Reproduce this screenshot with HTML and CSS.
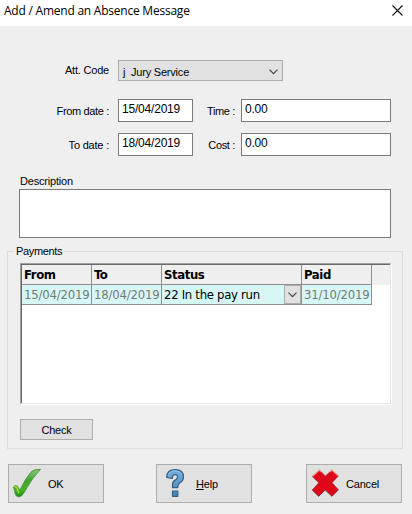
FILE: index.html
```html
<!DOCTYPE html>
<html lang="en">
<head>
<meta charset="utf-8">
<title>Add / Amend an Absence Message</title>
<link rel="stylesheet" href="styles.css">
</head>
<body>
<header class="titlebar">
  <span class="title">Add / Amend an Absence Message</span>
  <svg class="close" width="11" height="11" viewBox="0 0 11 11"><path d="M.5.5l10 10M10.5.5l-10 10" stroke="#111" stroke-width="1.1"/></svg>
</header>
<main class="dialog">
  <div class="form">
    <span class="label code-label">Att. Code</span>
    <div class="select"><span class="code">j&nbsp; Jury Service</span><svg width="9" height="6" viewBox="0 0 9 6"><path d="M.5.7l4 4 4-4" fill="none" stroke="#444" stroke-width="1.2"/></svg></div>
    <span class="label from-label">From date :</span>
    <div class="input"><span class="date">15/04/2019</span></div>
    <span class="label time-label">Time :</span>
    <div class="input"><span class="amount">0.00</span></div>
    <span class="label to-label">To date :</span>
    <div class="input"><span class="date">18/04/2019</span></div>
    <span class="label cost-label">Cost :</span>
    <div class="input"><span class="amount">0.00</span></div>
  </div>
  <div class="description-label"><span class="desc">Description</span></div>
  <div class="textarea"></div>
  <section class="group">
    <span class="legend">Payments</span>
    <div class="table">
      <div class="row head">
        <div class="cell">From</div><div class="cell">To</div><div class="cell">Status</div><div class="cell">Paid</div>
      </div>
      <div class="row data">
        <div class="cell muted">15/04/2019</div><div class="cell muted">18/04/2019</div>
        <div class="cell status"><span>22 In the pay run</span><span class="drop"><svg width="9" height="6" viewBox="0 0 9 6"><path d="M.5.7l4 4 4-4" fill="none" stroke="#444" stroke-width="1.2"/></svg></span></div>
        <div class="cell muted">31/10/2019</div>
      </div>
    </div>
    <div class="button check"><span>Check</span></div>
  </section>
  <footer class="actions">
    <div class="button action">
      <svg class="icon" width="36" height="37" viewBox="0 0 36 37">
        <defs><linearGradient id="green" x1="0" y1="0" x2="0" y2="1"><stop offset="0" stop-color="#8bc87c"/><stop offset=".4" stop-color="#43a336"/><stop offset=".75" stop-color="#48b51e"/><stop offset="1" stop-color="#228c22"/></linearGradient></defs>
        <path d="M4.500 22Q6 19.700 8.500 21.200Q10 24 10.800 25.500Q16.500 13 22.500 6.500Q25 4.200 31.500 4.300Q22.500 13.500 14.500 28.500Q12.500 32 9.500 31.800Q7 31.800 6.200 28.500Q5.500 25.500 4.500 22Z" fill="url(#green)" stroke="#338e27" stroke-width=".8"/>
        <path d="M5.300 22.300Q7 20.800 8 23L9.800 28.200" fill="none" stroke="#a5de3d" stroke-width="1.400"/>
      </svg>
      <span class="ok">OK</span>
    </div>
    <div class="button action">
      <svg class="icon" width="36" height="37" viewBox="0 0 36 37">
        <defs><linearGradient id="blue" x1="0" y1="0" x2="0" y2="1"><stop offset="0" stop-color="#78b0df"/><stop offset="1" stop-color="#4482b5"/></linearGradient></defs>
        <path d="M9.700 12.400Q9.700 4.600 18.200 4.600Q26.500 4.600 26.500 12Q26.500 15.800 22.500 18.200Q20.800 19.400 20.800 22.600H15.500V19.500Q15.500 16.500 18.600 14.700Q20.600 13.400 20.500 11.500Q20.400 9.600 18 9.600Q15.500 9.600 15.200 13.500ZM15.500 26H20.800V31.300H15.500Z" fill="url(#blue)" stroke="#365f83" stroke-width="1.200" stroke-linejoin="round"/>
        <path d="M11 10.700Q12 5.800 18 5.800Q23 5.800 24.800 9" fill="none" stroke="#94c7ed" stroke-width=".8"/>
      </svg>
      <span class="help"><u>H</u>elp</span>
    </div>
    <div class="button action">
      <svg class="icon" width="36" height="37" viewBox="0 0 36 37">
        <path d="M12.500 5L18.400 11.200 24.800 5 31.300 11 25 17.700 31.300 24.800 25 31.200 18.200 24.800 11.800 31.200 5.300 25 11.800 17.800 5.300 11.500Z" fill="#de0618" stroke="#a32630" stroke-width=".8"/>
        <path d="M5.500 11.300L12.500 5.100 14.400 7M22.800 7L24.900 5.100 31 10.700" fill="none" stroke="#f3a28f" stroke-width="1.100"/>
        <path d="M5.500 25.200L11.800 31.200 18.200 24.900 25 31.200 31.200 24.900" fill="none" stroke="#8b222a" stroke-width=".8"/>
      </svg>
      <span class="cancel">Cancel</span>
    </div>
  </footer>
</main>
</body>
</html>
```
FILE: styles.css
```css
* { box-sizing: border-box; }
body { margin: 0; width: 412px; height: 514px; overflow: hidden; background: #efefef; color: #000; font: 11px/14px "Liberation Sans", sans-serif; letter-spacing: -.2px; }
span { white-space: nowrap; }
svg { display: block; flex: none; }
.titlebar { height: 26px; display: flex; justify-content: space-between; background: #fff; padding: 3px 9px 0 4px; }
.title { font: 12px/16px "Open Sans", sans-serif; letter-spacing: -.23px; }
.close { margin-top: 2px; }
.dialog { padding-top: 34px; }
.form { display: grid; grid-template-columns: 118px 75px 48px 150px; grid-template-rows: 21px 18px 23px 11px 23px; }
.label { justify-self: end; align-self: center; margin-right: 9px; }
.from-label { letter-spacing: -.35px; }
.time-label, .cost-label { margin-right: 6px; letter-spacing: -.35px; }
.code-label, .select { grid-row: 1; }
.code-label { margin-top: -2px; }
.from-label, .from-label + .input, .time-label, .time-label + .input { grid-row: 3; }
.to-label, .to-label + .input, .cost-label, .cost-label + .input { grid-row: 5; }
.select { grid-column: 2 / 5; width: 165px; display: flex; align-items: center; justify-content: space-between; background: #e1e1e1; border: 1px solid #adadad; padding: 2px 4px 0; }
.input { background: #fff; border: 1px solid #7a7a7a; padding: 2px 3px; font-size: 12px; letter-spacing: -.2px; }
.description-label { margin: 18px 0 0 20px; height: 14px; }
.textarea { margin: 1px 0 0 19px; width: 372px; height: 49px; background: #fff; border: 1px solid #7a7a7a; }
.group { margin: 13px 0 0 7px; width: 396px; height: 198px; border: 1px solid #dcdcdc; display: flex; flex-direction: column; padding-left: 12px; }
.legend { align-self: flex-start; height: 14px; margin: -8px 0 0 -6px; padding: 0 2px; background: #efefef; letter-spacing: -.35px; }
.table { margin-top: 5px; width: 371px; height: 141px; background: #fff; border: 1px solid; border-color: #a0a0a0 #e3e3e3 #e3e3e3 #a0a0a0; box-shadow: inset 1px 1px #696969, 1px 1px #fff; padding: 1px 0 0 1px; font: 13px/19px "DejaVu Sans Condensed", "DejaVu Sans", sans-serif; letter-spacing: -.3px; flex: none; }
.row { display: grid; grid-template-columns: 70px 70px 140px 70px; }
.head { height: 20px; background: #efefef; font-weight: bold; letter-spacing: -.4px; }
.cell { border-right: 1px solid #8e8e8e; border-bottom: 1px solid #8e8e8e; padding-left: 2px; height: 20px; white-space: nowrap; }
.data .cell { background: #d7f7f6; }
.data .muted { color: #777; letter-spacing: -.2px; }
.status { display: flex; justify-content: space-between; }
.drop { width: 17px; height: 19px; display: flex; align-items: center; justify-content: center; background: #e1e1e1; border: 1px solid #adadad; }
.button { background: #e1e1e1; border: 1px solid #adadad; }
.check { width: 73px; height: 21px; margin: 15px 0 0; display: flex; justify-content: center; align-items: center; flex: none; }
.check span { padding-top: 1px; }
.actions { margin: 15px 0 0 8px; display: grid; grid-template-columns: 148px 150px 96px; }
.action { width: 96px; height: 39px; display: flex; align-items: center; }
.action span { margin-left: 3px; }
```
